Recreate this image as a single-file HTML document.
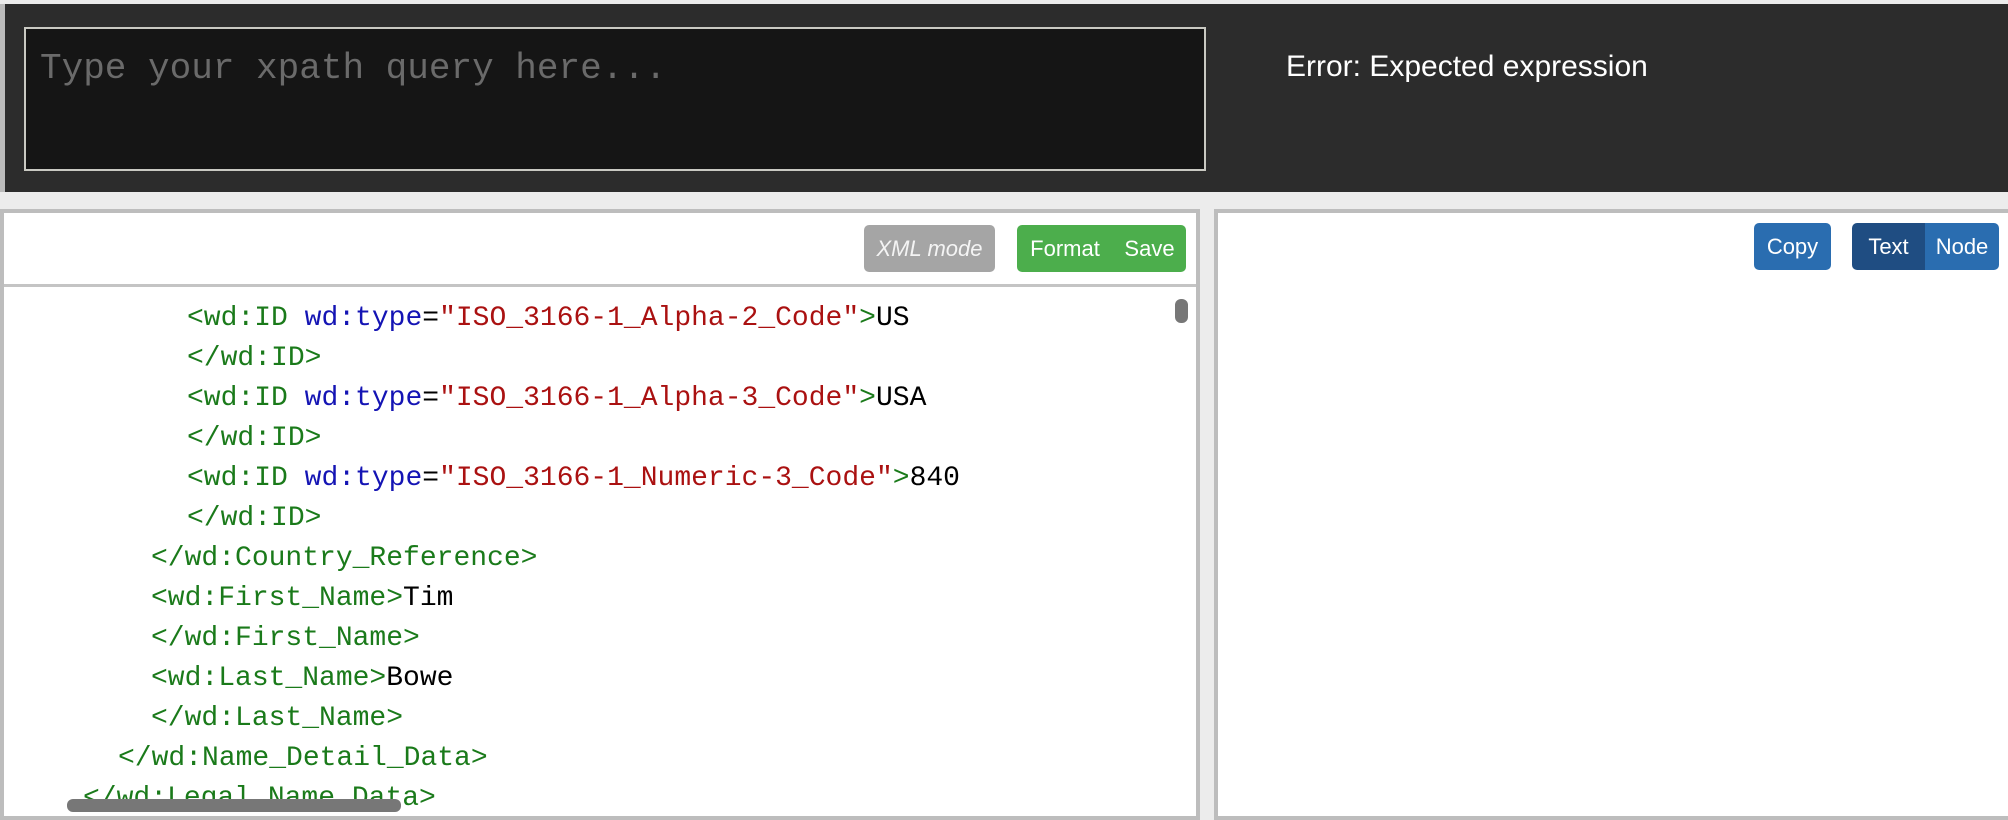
<!DOCTYPE html>
<html><head><meta charset="utf-8"><style>
*{box-sizing:border-box;margin:0;padding:0}
body{width:2008px;height:820px;overflow:hidden;background:#ececec;font-family:"Liberation Sans",Arial,sans-serif;position:relative}
#top{position:absolute;left:0;top:4px;width:2008px;height:188px;background:#2c2c2c;border-left:5px solid #bbb}
#ta{position:absolute;left:19px;top:23px;width:1182px;height:144px;background:#151515;border:2px solid #c9c9c2;font-family:"Liberation Mono",monospace;font-size:36px;color:#6a6a6a;padding:19px 14px}
#err{position:absolute;left:1281px;top:46px;color:#fff;font-size:30px}
.panel{position:absolute;top:209px;height:611px;background:#fff;border:4px solid #bdbdbd}
#lp{left:0;width:1200px}
#rp{left:1214px;width:794px;border-right:none}
.btn{position:absolute;height:47px;line-height:47px;color:#fff;font-size:22px;text-align:center;border-radius:5px}
#code{position:absolute;left:4px;top:284px;width:1192px;height:533px;border-top:3px solid #c4c4c4;overflow:hidden;font-family:"Liberation Mono",monospace;font-size:28px}
.l{position:absolute;white-space:pre;line-height:40px}
.t{color:#1a7a1a}.a{color:#1414b4}.s{color:#a11}.x{color:#000}
</style></head><body>
<div id="top"><div id="ta">Type your xpath query here...</div><div id="err">Error: Expected expression</div></div>
<div class="panel" id="lp">
<div class="btn" style="left:860px;top:12px;width:131px;background:#a5a5a5;font-style:italic;color:#f4f4f4">XML mode</div>
<div class="btn" style="left:1013px;top:12px;width:169px;background:#4cae4c"><span style="position:absolute;left:0;width:96px">Format</span><span style="position:absolute;left:96px;width:73px">Save</span></div>
</div>
<div id="code">
<div class="l" style="left:183px;top:12px"><span class="t">&lt;wd:ID</span> <span class="a">wd:type</span>=<span class="s">"ISO_3166-1_Alpha-2_Code"</span><span class="t">&gt;</span><span class="x">US</span></div>
<div class="l t" style="left:183px;top:52px">&lt;/wd:ID&gt;</div>
<div class="l" style="left:183px;top:92px"><span class="t">&lt;wd:ID</span> <span class="a">wd:type</span>=<span class="s">"ISO_3166-1_Alpha-3_Code"</span><span class="t">&gt;</span><span class="x">USA</span></div>
<div class="l t" style="left:183px;top:132px">&lt;/wd:ID&gt;</div>
<div class="l" style="left:183px;top:172px"><span class="t">&lt;wd:ID</span> <span class="a">wd:type</span>=<span class="s">"ISO_3166-1_Numeric-3_Code"</span><span class="t">&gt;</span><span class="x">840</span></div>
<div class="l t" style="left:183px;top:212px">&lt;/wd:ID&gt;</div>
<div class="l t" style="left:147px;top:252px">&lt;/wd:Country_Reference&gt;</div>
<div class="l" style="left:147px;top:292px"><span class="t">&lt;wd:First_Name&gt;</span><span class="x">Tim</span></div>
<div class="l t" style="left:147px;top:332px">&lt;/wd:First_Name&gt;</div>
<div class="l" style="left:147px;top:372px"><span class="t">&lt;wd:Last_Name&gt;</span><span class="x">Bowe</span></div>
<div class="l t" style="left:147px;top:412px">&lt;/wd:Last_Name&gt;</div>
<div class="l t" style="left:114px;top:452px">&lt;/wd:Name_Detail_Data&gt;</div>
<div class="l t" style="left:79px;top:492px">&lt;/wd:Legal_Name_Data&gt;</div>
<div style="position:absolute;left:1171px;top:12px;width:13px;height:24px;border-radius:6px;background:#777"></div>
<div style="position:absolute;left:63px;top:512px;width:334px;height:13px;border-radius:6px;background:#777"></div>
</div>
<div class="panel" id="rp">
<div class="btn" style="left:536px;top:10px;width:77px;background:#2a6db0">Copy</div>
<div class="btn" style="left:634px;top:10px;width:73px;background:#1f4d82;border-radius:5px 0 0 5px">Text</div>
<div class="btn" style="left:707px;top:10px;width:74px;background:#2a6db0;border-radius:0 5px 5px 0">Node</div>
</div>
</body></html>
